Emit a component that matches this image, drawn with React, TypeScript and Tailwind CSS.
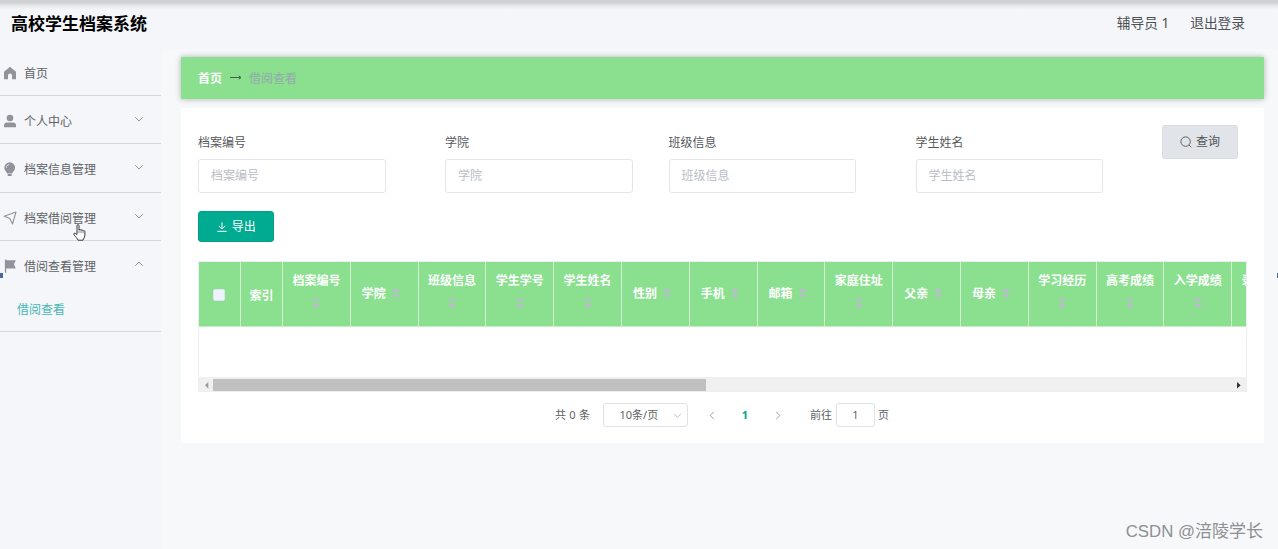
import React from "react";

const ICON = "h-[14px] w-[14px] shrink-0";

const HomeIcon = () => (
  <svg viewBox="0 0 14 14" className={ICON} fill="#8f939a">
    <path d="M7 .8 1 5.700v7.500h4V9.400a2 2 0 0 1 4 0v3.800h4V5.700z" />
  </svg>
);
const UserIcon = () => (
  <svg viewBox="0 0 14 14" className={ICON} fill="#8f939a">
    <circle cx="7" cy="4" r="3.300" />
    <path d="M1 13.300v-2C1 9.400 2.400 8.500 4 8.500h6c1.600 0 3 .9 3 2.800v2z" />
  </svg>
);
const BulbIcon = () => (
  <svg viewBox="0 0 14 14" className={ICON}>
    <path fill="#8f939a" d="M6.700.3a5.400 5.400 0 0 0-5.400 5.400c0 2.500 2 3.600 2.900 5.700h5c.9-2.100 2.900-3.200 2.900-5.700A5.400 5.400 0 0 0 6.700.3zM4.700 12h4v1.900h-4z" />
    <path d="M3.300 5.800C3.400 4 4.500 2.800 6.200 2.500" fill="none" stroke="#e4e6ea" strokeWidth="1" />
  </svg>
);
const SendIcon = () => (
  <svg viewBox="0 0 14 14" className={ICON} fill="none" stroke="#8f939a" strokeWidth="1.100" strokeLinejoin="round">
    <path d="M13 1 1.200 5.300l5.600 2.200L9.500 13z" />
  </svg>
);
const FlagIcon = () => (
  <svg viewBox="0 0 14 14" className={ICON} fill="#8f939a">
    <path d="M1.900.5h1.300V13.700H1.900zM3.200 1.200h9.600L11 5.300l1.800 4.200H3.200z" />
  </svg>
);

function Chevron({ d, className }: { d: string; className: string }) {
  return (
    <svg viewBox="0 0 10 10" className={className} fill="none" stroke="currentColor" strokeWidth="1">
      <path d={d} />
    </svg>
  );
}
const DOWN = "M1.200 3.200 5 7l3.800-3.800";
const UP = "M1.200 6.800 5 3l3.800 3.800";
const LEFT = "M7 1 3 5l4 4";
const RIGHT = "M3 1l4 4-4 4";

function MenuItem({ icon, label, arrow }: { icon: React.ReactNode; label: string; arrow?: string }) {
  return (
    <div className="flex h-full items-center pl-[3px] pr-[17px] pt-[2px]">
      {icon}
      <span className="ml-[7px] grow pt-[2px]">{label}</span>
      {arrow && <Chevron d={arrow} className="mb-[4px] h-[10px] w-[10px] text-[#8f939a]" />}
    </div>
  );
}

function Sorter() {
  return (
    <svg viewBox="0 0 8 12" className="block h-[12px] w-[8px] shrink-0" fill="#b7bfc9">
      <path d="M4 .6 8 5H0zM4 11.400 8 7H0z" />
    </svg>
  );
}

const columns = ["档案编号", "学院", "班级信息", "学生学号", "学生姓名", "性别", "手机", "邮箱", "家庭住址", "父亲", "母亲", "学习经历", "高考成绩", "入学成绩", "录取专业"];

function HeaderCell({ label }: { label: string }) {
  return label.length > 2 ? (
    <div className="flex w-[67.8px] shrink-0 flex-col items-center border-r border-[#d3f1d3] pt-[9px]">
      <span className="whitespace-nowrap leading-[20px]">{label}</span>
      <div className="mt-[6px]"><Sorter /></div>
    </div>
  ) : (
    <div className="flex w-[67.8px] shrink-0 items-center border-r border-[#d3f1d3] pb-[2px] pl-[11px]">
      <span className="mr-[6px] pt-[2px]">{label}</span>
      <Sorter />
    </div>
  );
}

function Field({ label, className }: { label: string; className: string }) {
  return (
    <div className={className}>
      <div className="h-[34px] leading-[36px] text-[#55585c]">{label}</div>
      <div className="h-[34px] w-[187.500px] rounded-[3px] border border-[#e3e5ea] pl-[12px] leading-[32px] text-[#b9bdc5]">{label}</div>
    </div>
  );
}

export default function App() {
  return (
    <div className="relative flex h-[549px] w-[1278px] flex-col overflow-hidden bg-[#f7f8fa] font-['Noto_Sans','Noto_Sans_CJK_SC',sans-serif] text-[12px] text-[#5f6266]">
      <header className="flex h-[49px] shrink-0 items-center bg-[#f4f6fa] bg-[linear-gradient(#cfd0d4_0px,#d2d3d7_3px,#e8e9ed_6px,#f4f6fa_10px)] pb-[2px] pl-[11px] pr-[33px]">
        <h1 className="grow text-[17px] font-bold text-black">高校学生档案系统</h1>
        <span className="mr-[21px] text-[13.700px] text-[#4d4f53]">辅导员 1</span>
        <span className="text-[13.700px] text-[#4d4f53]">退出登录</span>
      </header>

      <div className="flex grow">
        <nav className="flex w-[161px] shrink-0 flex-col bg-[#f4f6fa]">
          <div className="h-[47px] border-b border-[#d4d6dc]"><MenuItem icon={<HomeIcon />} label="首页" /></div>
          <div className="h-[48px] border-b border-[#d4d6dc]"><MenuItem icon={<UserIcon />} label="个人中心" arrow={DOWN} /></div>
          <div className="h-[49px] border-b border-[#d4d6dc]"><MenuItem icon={<BulbIcon />} label="档案信息管理" arrow={DOWN} /></div>
          <div className="h-[48px] border-b border-[#d4d6dc]"><MenuItem icon={<SendIcon />} label="档案借阅管理" arrow={DOWN} /></div>
          <div className="flex h-[91px] flex-col border-b border-[#d4d6dc]">
            <div className="h-[48px] shrink-0"><MenuItem icon={<FlagIcon />} label="借阅查看管理" arrow={UP} /></div>
            <div className="pl-[17px] leading-[42px] text-[#48b6b4]">借阅查看</div>
          </div>
        </nav>

        <main className="w-[1103px] pl-[20px] pt-[8px]">
          <div className="flex h-[42px] items-center bg-[#8ae08f] pl-[17px] shadow-[0_0_6px_rgba(0,0,0,0.3)]">
            <span className="pt-[2px] font-bold text-white">首页</span>
            <svg viewBox="0 0 12 6" className="ml-[8px] h-[6px] w-[12px]" fill="none" stroke="#46604a" strokeWidth="1">
              <path d="M0 2.500h11M8.800.7 11 2.500 8.800 4.300" />
            </svg>
            <span className="ml-[7px] pt-[2px] text-[#93a9ae]">借阅查看</span>
          </div>

          <section className="mt-[9px] h-[335px] bg-white px-[17px] pt-[17px]">
            <div className="flex">
              <Field label="档案编号" className="w-[247px]" />
              <Field label="学院" className="w-[223.500px]" />
              <Field label="班级信息" className="w-[247px]" />
              <Field label="学生姓名" className="w-[246.500px]" />
              <button className="flex h-[34px] w-[76px] items-center justify-center rounded-[3px] border border-[#d9dee2] bg-[#e1e5e9] text-[#505357]">
                <svg viewBox="0 0 12 12" className="mr-[4px] h-[12px] w-[12px]" fill="none" stroke="currentColor" strokeWidth="0.900">
                  <circle cx="5.600" cy="5.600" r="4.700" />
                  <path d="m9 9 2.300 2.300" />
                </svg>
                查询
              </button>
            </div>

            <button className="mt-[18px] flex h-[31px] w-[75.500px] items-center justify-center rounded-[3px] border border-[#009f88] bg-[#00ab92] pl-px pt-px text-white">
              <svg viewBox="0 0 10 10" className="mr-[5px] h-[10px] w-[10px]" fill="none" stroke="currentColor" strokeWidth="1">
                <path d="M5 .3v6.500M1.800 4 5 7l3.200-3M.3 9.300h9.400" />
              </svg>
              导出
            </button>

            <div className="mt-[19px] h-[131px] w-[1048.500px] border border-[#ebeef2]">
              <div className="flex h-[65px] overflow-hidden border-b border-[#c4eec8] bg-[#8ae08f] font-bold text-white">
                <div className="flex w-[42px] shrink-0 items-center justify-center border-r border-[#d3f1d3] pt-[2px] pr-[1px]">
                  <span className="h-[12px] w-[12px] rounded-[2px] border border-[#dfe5ef] bg-[#eff3fd]" />
                </div>
                <div className="flex w-[42px] shrink-0 items-center justify-center border-r border-[#d3f1d3] pt-[3px]">索引</div>
                {columns.map((c) => <HeaderCell key={c} label={c} />)}
              </div>
              <div className="h-[50px]" />
              <div className="flex h-[14px] items-center bg-[#f0f0f0] pt-px">
                <svg viewBox="0 0 14 14" className="h-[14px] w-[14px]" fill="#999"><path d="M9.300 4v6.400L6 7.200z" /></svg>
                <div className="h-[12px] w-[493px] bg-[#c0c0c0]" />
                <div className="grow" />
                <svg viewBox="0 0 14 14" className="h-[14px] w-[14px]" fill="#303030"><path d="M5 4v6.400l3.700-3.200z" /></svg>
              </div>
            </div>

            <div className="mt-[11px] flex h-[24px] items-center pl-[357px] text-[11px]">
              <span className="w-[47.500px] whitespace-pre pt-px [word-spacing:.5px]">共 0 条</span>
              <div className="flex h-[24px] w-[85.500px] shrink-0 items-center rounded-[3px] border border-[#e0e2e7] pl-[16px] pr-[5px]">
                <span className="grow">10条/页</span>
                <Chevron d={DOWN} className="h-[9px] w-[9px] text-[#b5b9c1]" />
              </div>
              <Chevron d={LEFT} className="ml-[19px] h-[9px] w-[10px] text-[#8f939a]" />
              <span className="w-[56px] text-center font-bold text-[#00a58d]">1</span>
              <Chevron d={RIGHT} className="h-[9px] w-[10px] text-[#8f939a]" />
              <span className="ml-[27px] pt-px">前往</span>
              <div className="ml-[4px] h-[24px] w-[39px] rounded-[3px] border border-[#e0e2e7] text-center leading-[22px]">1</div>
              <span className="ml-[3px] pt-px">页</span>
            </div>
          </section>
        </main>
      </div>

      <div className="absolute left-0 top-[273px] h-[5px] w-[3px] bg-[#466a9e]" />
      <div className="absolute right-0 top-[273px] h-[5px] w-[1px] bg-[#466a9e]" />
      <svg viewBox="0 0 13 17" className="absolute left-[73px] top-[224px] h-[17px] w-[13px]" fill="#fff" stroke="#34373b" strokeWidth="1" strokeLinejoin="round">
        <path d="M4 10.500V1.700c0-1.500 2-1.500 2 0V6c.2-.8 1.900-.7 2 .4.300-.8 1.900-.6 2 .5.500-.7 1.900-.3 1.900.8v3.500c0 1.700-1 2.700-1.400 3.900l-.5 1.100H5c-.8-1.900-2.300-3.400-3.900-5.300-1-1.400.3-2.200 1.400-1.400z" />
        <path d="M6 6v3M8 6.500v2.600M10 7v2.300" fill="none" strokeWidth=".6" />
      </svg>
      <div className="absolute right-[15px] top-[519px] whitespace-nowrap text-[17px] leading-[24px] text-[#8d8f92]"><span className="font-['Liberation_Sans'] text-[16.800px]">CSDN @</span>涪陵学长</div>
    </div>
  );
}
